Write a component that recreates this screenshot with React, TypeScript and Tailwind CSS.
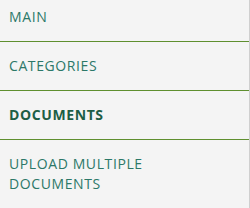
import React from 'react';

const items = [
  { label: 'MAIN', active: false },
  { label: 'CATEGORIES', active: false },
  { label: 'DOCUMENTS', active: true },
  { label: 'UPLOAD MULTIPLE DOCUMENTS', active: false },
];

export default function App() {
  return (
    <div className="h-[208px] w-[250px] overflow-hidden bg-[#f4f4f4] border-r border-[#cfcfcf]" style={{ fontFamily: '"Open Sans", sans-serif' }}>
      <ul className="-mt-[7px]">
        {items.map((item, i) => (
          <li
            key={item.label}
            className={`px-[9px] py-[14px] text-[14px] leading-[20px] tracking-[0.6px] ${
              i < items.length - 1 ? 'border-b border-[#5f8f2f]' : ''
            } ${item.active ? 'font-bold text-[#1d5e45]' : 'text-[#2c7868]'}`}
          >
            {item.label === 'UPLOAD MULTIPLE DOCUMENTS' ? (
              <>
                UPLOAD MULTIPLE
                <br />
                DOCUMENTS
              </>
            ) : (
              item.label
            )}
          </li>
        ))}
      </ul>
    </div>
  );
}
